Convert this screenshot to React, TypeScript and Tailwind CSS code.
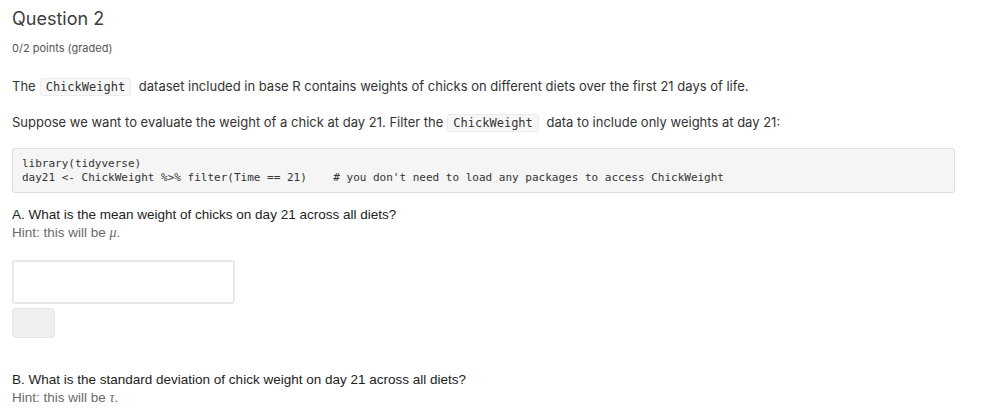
const inter = "font-['Inter',sans-serif]";
const mono = "font-['DejaVu_Sans_Mono',monospace]";

function InlineCode({ children }: { children: string }) {
  return (
    <code
      className={`${mono} mx-[4px] rounded-[3px] border border-[#ececec] bg-[#f7f7f7] px-[5px] py-[1px] text-[12px] text-[#333]`}
    >
      {children}
    </code>
  );
}

function Hint({ symbol }: { symbol: string }) {
  return (
    <p className="text-[13.5px] leading-[18px] text-[#6b6b6b]">
      Hint: this will be{" "}
      <span className="font-['Liberation_Serif',serif] italic text-[14px]">{symbol}</span>.
    </p>
  );
}

export default function App() {
  return (
    <div className="min-h-[416px] w-[983px] bg-white px-3 pt-[7px] text-[#333]">
      <h2 className={`${inter} text-[18px] leading-[24px] text-[#3d3d3d]`}>Question 2</h2>
      <p className={`${inter} mt-[10px] text-[11px] leading-[14px] text-[#555]`}>
        0/2 points (graded)
      </p>

      <p className={`${inter} mt-[22px] text-[13px] leading-[18px] text-[#333]`}>
        The<InlineCode>ChickWeight</InlineCode> dataset included in base R contains weights of
        chicks on different diets over the first 21 days of life.
      </p>
      <p className={`${inter} mt-[17px] text-[13px] leading-[18px] text-[#333]`}>
        Suppose we want to evaluate the weight of a chick at day 21. Filter the
        <InlineCode>ChickWeight</InlineCode> data to include only weights at day 21:
      </p>

      <pre
        className={`${mono} mt-[16px] w-[943px] rounded-[3px] border border-[#dedede] bg-[#f5f5f5] px-[9px] pt-[8px] pb-[7px] text-[11px] leading-[14px] text-[#333]`}
      >
        {"library(tidyverse)\nday21 <- ChickWeight %>% filter(Time == 21)    # you don't need to load any packages to access ChickWeight"}
      </pre>

      <div className="mt-[13px] font-['Liberation_Sans',Arial,sans-serif]">
        <p className="text-[13.5px] leading-[18px] text-[#222]">
          A. What is the mean weight of chicks on day 21 across all diets?
        </p>
        <Hint symbol="μ" />
      </div>

      <div className="mt-[18px] flex flex-col gap-[4px]">
        <input
          type="text"
          className="h-[44px] w-[223px] rounded-[3px] border-2 border-[#e8e8e8] bg-white"
        />
        <button className="h-[30px] w-[43px] rounded-[4px] border border-[#e6e6e6] bg-[#efefef]" />
      </div>

      <div className="mt-[33px] font-['Liberation_Sans',Arial,sans-serif]">
        <p className="text-[13.5px] leading-[18px] text-[#222]">
          B. What is the standard deviation of chick weight on day 21 across all diets?
        </p>
        <Hint symbol="τ" />
      </div>
    </div>
  );
}
